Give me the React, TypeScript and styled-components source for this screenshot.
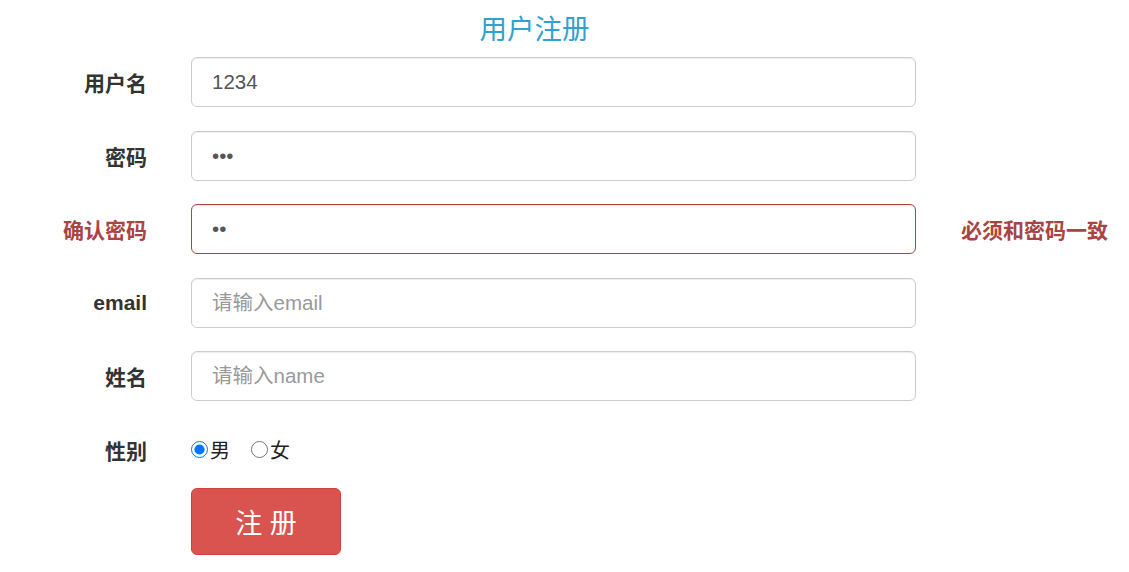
import React from "react";
import styled, { createGlobalStyle } from "styled-components";

const GlobalStyle = createGlobalStyle`
  html, body {
    margin: 0;
    padding: 0;
    background: #fff;
  }
  body {
    font-family: "Liberation Sans", "Noto Sans CJK SC", sans-serif;
    color: #333;
  }
  * { box-sizing: border-box; }
`;

const Page = styled.div`
  width: 1129px;
  padding-top: 10px;
`;

const Title = styled.h2`
  width: 1069px;
  margin: 0 0 7px 0;
  text-align: center;
  font-size: 27.5px;
  line-height: 40px;
  font-weight: 400;
  color: #31a1cf;
`;

const Form = styled.form`
  display: flex;
  flex-direction: column;
  gap: 23.5px;
`;

const Row = styled.div`
  display: grid;
  grid-template-columns: 147px 725px auto;
  column-gap: 44px;
  align-items: center;
  height: 50px;
`;

const Label = styled.label<{ $error?: boolean }>`
  text-align: right;
  font-size: 21px;
  font-weight: 700;
  color: ${(p) => (p.$error ? "#a94442" : "#333")};
`;

const Input = styled.input<{ $error?: boolean }>`
  width: 725px;
  height: 50px;
  padding: 0 20px;
  font-family: "Liberation Sans", "Noto Sans CJK SC", sans-serif;
  font-size: 20.5px;
  color: #555;
  background: #fff;
  border: 1px solid ${(p) => (p.$error ? "#a94442" : "#ccc")};
  border-radius: 6px;
  box-shadow: inset 0 1px 1px rgba(0, 0, 0, 0.075);
  outline: none;
  &::placeholder {
    color: #999;
  }
`;

const Help = styled.span`
  margin-left: 1px;
  font-size: 21px;
  font-weight: 700;
  color: #a94442;
  white-space: nowrap;
`;

const RadioGroup = styled.div`
  display: flex;
  align-items: center;
  gap: 21px;
`;

const RadioLabel = styled.label`
  display: inline-flex;
  align-items: center;
  font-size: 20px;
  color: #222;
`;

const Radio = styled.input`
  width: 17px;
  height: 17px;
  margin: 0 2px 0 0;
`;

const ButtonRow = styled.div`
  display: grid;
  grid-template-columns: 147px auto;
  column-gap: 44px;
  margin-top: -10.5px;
`;

const SubmitButton = styled.button`
  grid-column: 2;
  width: 150px;
  height: 67px;
  display: flex;
  align-items: center;
  justify-content: center;
  font-family: "Liberation Sans", "Noto Sans CJK SC", sans-serif;
  font-size: 27px;
  color: #fff;
  background: #d9534f;
  border: 1px solid #d43f3a;
  border-radius: 6px;
  cursor: pointer;
`;

export default function App() {
  return (
    <Page>
      <GlobalStyle />
      <Title>用户注册</Title>
      <Form onSubmit={(e) => e.preventDefault()}>
        <Row>
          <Label>用户名</Label>
          <Input type="text" defaultValue="1234" />
        </Row>
        <Row>
          <Label>密码</Label>
          <Input type="password" defaultValue="123" />
        </Row>
        <Row>
          <Label $error>确认密码</Label>
          <Input $error type="password" defaultValue="12" />
          <Help>必须和密码一致</Help>
        </Row>
        <Row>
          <Label>email</Label>
          <Input type="text" placeholder="请输入email" />
        </Row>
        <Row>
          <Label>姓名</Label>
          <Input type="text" placeholder="请输入name" />
        </Row>
        <Row>
          <Label>性别</Label>
          <RadioGroup>
            <RadioLabel>
              <Radio type="radio" name="sex" defaultChecked />男
            </RadioLabel>
            <RadioLabel>
              <Radio type="radio" name="sex" />女
            </RadioLabel>
          </RadioGroup>
        </Row>
        <ButtonRow>
          <SubmitButton type="submit">注 册</SubmitButton>
        </ButtonRow>
      </Form>
    </Page>
  );
}
